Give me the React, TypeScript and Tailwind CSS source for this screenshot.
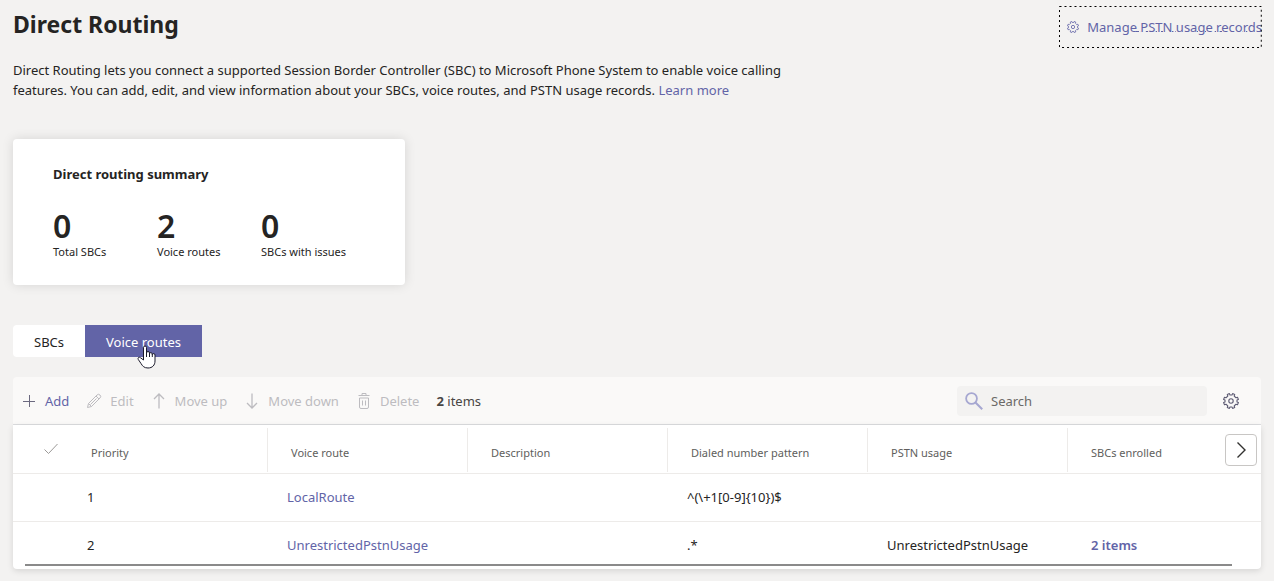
import { ReactNode, useState } from 'react'

interface Route {
  priority: number
  name: string
  description: string
  pattern: string
  usage: string
  sbcs: number
}

const routes: Route[] = [
  { priority: 1, name: 'LocalRoute', description: '', pattern: '^(\\+1[0-9]{10})$', usage: '', sbcs: 0 },
  { priority: 2, name: 'UnrestrictedPstnUsage', description: '', pattern: '.*', usage: 'UnrestrictedPstnUsage', sbcs: 2 },
]

const stats = [
  { value: 0, label: 'Total SBCs' },
  { value: 2, label: 'Voice routes' },
  { value: 0, label: 'SBCs with issues' },
]

const columns = ['Priority', 'Voice route', 'Description', 'Dialed number pattern', 'PSTN usage', 'SBCs enrolled']

function Icon({ children, className = 'size-4' }: { children: ReactNode; className?: string }) {
  return (
    <svg className={`shrink-0 ${className}`} viewBox="0 0 16 16" fill="none" stroke="currentColor" strokeWidth={1} aria-hidden="true">
      {children}
    </svg>
  )
}

function GearIcon({ className }: { className?: string }) {
  return (
    <Icon className={className}>
      <path
        strokeLinejoin="round"
        strokeWidth={1.1}
        d="M6.4.6 7 2h2l.6-1.4 2.1.9-.5 1.5 1.8 1.8 1.5-.5.9 2.1L14 7v2l1.4.6-.9 2.1-1.5-.5-1.8 1.8.5 1.5-2.1.9L9 14H7l-.6 1.4-2.1-.9.5-1.5L3 11.2l-1.5.5-.9-2.1L2 9V7L.6 6.4l.9-2.1 1.5.5L4.8 3l-.5-1.5z"
      />
      <circle cx="8" cy="8" r="2.2" strokeWidth={1.1} />
    </Icon>
  )
}

function ToolbarButton({ label, icon, disabled }: { label: string; icon: ReactNode; disabled?: boolean }) {
  return (
    <button
      type="button"
      disabled={disabled}
      className="flex items-center gap-2 text-[#6264a7] disabled:text-[#bdbcc0]"
    >
      {icon}
      {label}
    </button>
  )
}

function Toolbar() {
  return (
    <div className="flex h-12 items-center justify-between rounded-t border-b border-[#dcdddf] bg-[#faf9f8] pr-[18px] pl-2">
      <div className="flex items-center gap-[17px]">
        <ToolbarButton
          label="Add"
          icon={<Icon className="size-4 text-[#6b697f]"><path d="M8.5 2v12M2 8.5h12" /></Icon>}
        />
        <ToolbarButton
          label="Edit"
          disabled
          icon={
            <Icon>
              <path strokeLinejoin="round" d="M1.5 14.5l1-4 8.5-8.5a1.8 1.8 0 0 1 3 3L5.5 13.5zM2.5 10.5l3 3M10 3l3 3M4.5 11.5l6-6" />
            </Icon>
          }
        />
        <ToolbarButton
          label="Move up"
          disabled
          icon={<Icon><path strokeWidth={1.3} d="M8 15.5V1M3 6l5-5 5 5" /></Icon>}
        />
        <ToolbarButton
          label="Move down"
          disabled
          icon={<Icon><path strokeWidth={1.3} d="M8 .5V15M3 10l5 5 5-5" /></Icon>}
        />
        <ToolbarButton
          label="Delete"
          disabled
          icon={
            <Icon>
              <path strokeLinejoin="round" d="M2.5 2.5h11M6 2.5v-2h4v2M3.5 5v9A1.5 1.5 0 0 0 5 15.5h6a1.5 1.5 0 0 0 1.5-1.5V5zM6.5 7.5v5M9.5 7.5v5" />
            </Icon>
          }
        />
        <span className="text-[#484644]">
          <b className="font-bold">2</b> items
        </span>
      </div>

      <div className="flex items-center gap-3">
        <label className="flex h-[30px] w-[250px] items-center gap-2 rounded bg-[#f3f2f1] px-2">
          <Icon className="size-[18px] text-[#a6a7d1]">
            <circle cx="5.8" cy="5.8" r="4.8" strokeWidth={1.6} />
            <path strokeWidth={1.8} d="M9.3 9.3l6 6" />
          </Icon>
          <input
            type="text"
            aria-label="Search"
            placeholder="Search"
            className="min-w-0 flex-1 bg-transparent outline-none placeholder:text-[#6b6967]"
          />
        </label>
        <button type="button" aria-label="Table settings" className="p-1 text-[#5d5b73]">
          <GearIcon className="size-4" />
        </button>
      </div>
    </div>
  )
}

function RoutesTable() {
  return (
    <div className="relative rounded-b bg-white shadow-[0_2px_6px_rgba(0,0,0,0.12)]">
      <table className="w-full table-fixed text-left">
        <colgroup>
          <col className="w-[54px]" />
          <col className="w-[200px]" />
          <col className="w-[200px]" />
          <col className="w-[200px]" />
          <col className="w-[200px]" />
          <col className="w-[200px]" />
          <col />
        </colgroup>
        <thead>
          <tr className="h-12 border-b border-[#edebe9] text-[11px] text-[#605e5c]">
            <th className="p-0 font-normal">
              <Icon className="ml-[30px] size-4 text-[#9b9997]"><path d="M1.5 8.5l4 4L14.5 3" /></Icon>
            </th>
            {columns.map((c, i) => (
              <th key={c} className="p-0 pt-[3px] font-normal">
                <div
                  className={`flex h-11 items-center justify-between border-l pt-1.5 pr-1 pl-[23px] ${
                    i > 0 ? 'border-[#edebe9]' : 'border-transparent'
                  }`}
                >
                  {c}
                  {i === columns.length - 1 && (
                    <button
                      type="button"
                      aria-label="Scroll right"
                      className="-mt-1.5 flex size-8 items-center justify-center rounded border border-[#c8c6c4] bg-white text-[#323130]"
                    >
                      <Icon><path strokeWidth={1.4} d="M4.5 .5 12 8l-7.5 7.500" /></Icon>
                    </button>
                  )}
                </div>
              </th>
            ))}
          </tr>
        </thead>
        <tbody>
          {routes.map(r => (
            <tr key={r.priority} className="h-12 border-b border-[#edebe9] last:border-b-0">
              <td />
              <td className="px-5">{r.priority}</td>
              <td className="px-5">
                <a href="#" className="text-[#6264a7]">{r.name}</a>
              </td>
              <td className="px-5">{r.description}</td>
              <td className="px-5">{r.pattern}</td>
              <td className="px-5">{r.usage}</td>
              <td className="px-6">
                {r.sbcs > 0 && (
                  <a href="#" className="font-semibold text-[#6264a7]">{r.sbcs} items</a>
                )}
              </td>
            </tr>
          ))}
        </tbody>
      </table>
      <div className="absolute right-[29px] bottom-[3px] left-3 h-0.5 bg-[#8a8a8a]" />
    </div>
  )
}

export default function App() {
  const [tab, setTab] = useState('Voice routes')

  return (
    <main className="min-h-screen bg-[#f3f2f1] px-[13px] pb-3 font-['Noto_Sans','Open_Sans',sans-serif] text-[13px] leading-5 text-[#252423]">
      <header className="flex items-start justify-between pt-1.5">
        <h1 className="text-[23px] leading-9 font-bold">Direct Routing</h1>
        <a href="#" className="relative -mr-px flex h-[42px] items-center gap-2 pl-2 text-[#6264a7]">
          <svg className="absolute inset-0 size-full text-black" aria-hidden="true">
            <rect x="0.5" y="0.5" className="h-[41px] w-[calc(100%-1px)]" fill="none" stroke="currentColor" strokeDasharray="2 3" />
          </svg>
          <GearIcon className="size-3" />
          <span>
            Manage
            <span className="underline decoration-dashed decoration-1 -underline-offset-1"> PSTN usage records</span>
          </span>
        </a>
      </header>

      <p className="max-w-[800px] pt-3">
        Direct Routing lets you connect a supported Session Border Controller (SBC) to Microsoft Phone System to enable
        voice calling features. You can add, edit, and view information about your SBCs, voice routes, and PSTN usage
        records.{' '}
        <a href="#" className="text-[#6264a7]">Learn more</a>
      </p>

      <section className="mt-[39px] w-fit rounded-sm bg-white px-10 py-[25px] shadow-[0_0_12px_rgba(0,0,0,0.12)]">
        <h2 className="font-bold">Direct routing summary</h2>
        <dl className="mt-6 flex w-[312px]">
          {stats.map(s => (
            <div key={s.label} className="flex w-[104px] flex-col-reverse">
              <dt className="text-[11px] leading-4">{s.label}</dt>
              <dd className="text-[32px] leading-9 font-semibold">{s.value}</dd>
            </div>
          ))}
        </dl>
      </section>

      <div className="relative mt-10 flex w-fit">
        {['SBCs', 'Voice routes'].map(t => (
          <button
            key={t}
            type="button"
            onClick={() => setTab(t)}
            className={`h-8 px-[21px] pt-0.5 first:rounded-l-sm last:rounded-r-sm ${
              tab === t ? 'bg-[#6264a7] text-white' : 'bg-white'
            }`}
          >
            {t}
          </button>
        ))}
        {/* hand pointer resting on the active tab */}
        <svg className="pointer-events-none absolute top-5 left-[124px] h-6 w-[19px]" viewBox="0 0 19 24" aria-hidden="true">
          <path
            d="M6.5 15V2.5a1.5 1.5 0 0 1 3 0V8a1.5 1.5 0 0 1 3 0v.5a1.5 1.5 0 0 1 2.8.5v.5a1.4 1.4 0 0 1 2.7.5v6c0 4-2.5 7-7 7-4 0-5.5-2-7-4.5L1.3 14.5c-1-1.8.9-3 2.2-1.7z"
            fill="white"
            stroke="#1b1a2b"
          />
          <path d="M9.5 7.5V12M12.5 8v4M15.3 9v3" stroke="#1b1a2b" />
        </svg>
      </div>

      <section className="mt-5">
        <Toolbar />
        <RoutesTable />
      </section>
    </main>
  )
}
